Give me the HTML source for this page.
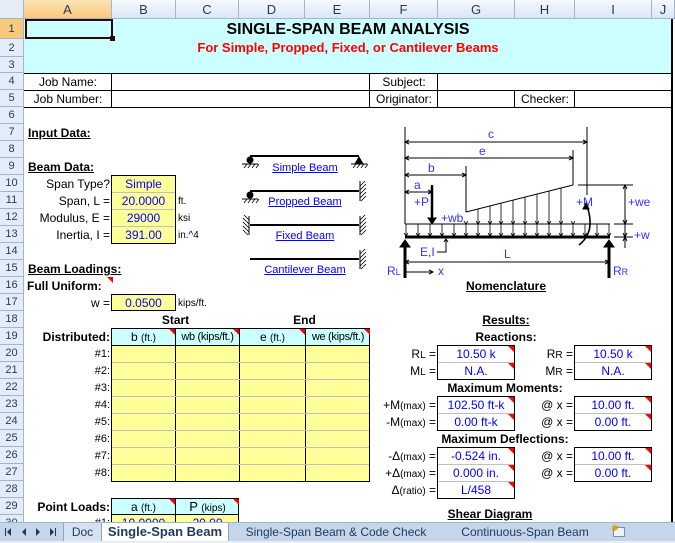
<!DOCTYPE html>
<html><head><meta charset="utf-8">
<style>
*{margin:0;padding:0;box-sizing:border-box}
body{width:675px;height:543px;overflow:hidden;background:#fff;font-family:"Liberation Sans",Arial,sans-serif;font-size:12px;color:#000;position:relative}
.a{position:absolute;white-space:nowrap}
.rh{position:absolute;left:0;width:24px;height:17px;background:#E4ECF7;border-bottom:1px solid #9EB6CE;border-right:1px solid #9EB6CE;text-align:center;font-size:11px;line-height:17px;color:#1F3A5C}
.ch{position:absolute;top:0;height:19px;background:linear-gradient(#F6F9FC,#DCE6F4);border-right:1px solid #9EB6CE;border-bottom:1px solid #9EB6CE;text-align:center;font-size:13px;line-height:19px;color:#1F3A5C}
.r{text-align:right}
.c{text-align:center}
.b{font-weight:bold}
.u{text-decoration:underline}
.y{background:#FFFF99}
.cy{background:#CCFFFF}
.blue{color:#0000FF}
.tri{position:absolute;width:0;height:0;border-top:6px solid #f00;border-left:6px solid transparent}
.lnk{color:#0000FF;text-decoration:underline;font-size:11px}
.tab{position:absolute;top:523px;height:18px;line-height:18px;font-size:12px;color:#1F3A5C;text-align:center}
</style></head><body>

<div class="ch" style="left:0;width:24px;background:#E4ECF7"></div>
<div class="ch" style="left:24px;width:88px;background:linear-gradient(#FBE3B4,#F8C97B)">A</div>
<div class="ch" style="left:112px;width:64px">B</div>
<div class="ch" style="left:176px;width:63px">C</div>
<div class="ch" style="left:239px;width:66px">D</div>
<div class="ch" style="left:305px;width:65px">E</div>
<div class="ch" style="left:370px;width:68px">F</div>
<div class="ch" style="left:438px;width:77px">G</div>
<div class="ch" style="left:515px;width:60px">H</div>
<div class="ch" style="left:575px;width:77px">I</div>
<div class="ch" style="left:652px;width:23px">J</div>

<div class="rh" style="top:19px;height:20px;line-height:20px;background:#F8C97B">1</div>
<div class="rh" style="top:39px;height:18px;line-height:18px">2</div>
<div class="rh" style="top:57px;height:16px;line-height:16px">3</div>
<div class="rh" style="top:73px">4</div><div class="rh" style="top:90px">5</div>
<div class="rh" style="top:107px">6</div><div class="rh" style="top:124px">7</div>
<div class="rh" style="top:141px">8</div><div class="rh" style="top:158px">9</div>
<div class="rh" style="top:175px">10</div><div class="rh" style="top:192px">11</div>
<div class="rh" style="top:209px">12</div><div class="rh" style="top:226px">13</div>
<div class="rh" style="top:243px">14</div><div class="rh" style="top:260px">15</div>
<div class="rh" style="top:277px">16</div><div class="rh" style="top:294px">17</div>
<div class="rh" style="top:311px">18</div><div class="rh" style="top:328px">19</div>
<div class="rh" style="top:345px">20</div><div class="rh" style="top:362px">21</div>
<div class="rh" style="top:379px">22</div><div class="rh" style="top:396px">23</div>
<div class="rh" style="top:413px">24</div><div class="rh" style="top:430px">25</div>
<div class="rh" style="top:447px">26</div><div class="rh" style="top:464px">27</div>
<div class="rh" style="top:481px">28</div><div class="rh" style="top:498px">29</div>
<div class="rh" style="top:515px">30</div>

<div class="a cy" style="left:24px;top:19px;width:648px;height:54px"></div>
<div class="a" style="left:25px;top:19px;width:88px;height:20px;border:2px solid #2a0a0a"></div>
<div class="a" style="left:110px;top:36px;width:5px;height:5px;background:#2a0a0a"></div>
<div class="a b c" style="left:24px;top:21px;width:648px;font-size:16px">SINGLE-SPAN BEAM ANALYSIS</div>
<div class="a b c" style="left:24px;top:40px;width:648px;font-size:13px;color:#FF0000">For Simple, Propped, Fixed, or Cantilever Beams</div>
<div class="a" style="left:671px;top:19px;width:2px;height:504px;background:#000"></div>

<div class="a" style="left:24px;top:73px;width:648px;height:35px;border-top:1px solid #000;border-bottom:1px solid #000"></div>
<div class="a" style="left:24px;top:90px;width:648px;height:1px;background:#000"></div>
<div class="a" style="left:111px;top:73px;width:1px;height:34px;background:#000"></div>
<div class="a" style="left:369px;top:73px;width:1px;height:34px;background:#000"></div>
<div class="a" style="left:437px;top:73px;width:1px;height:34px;background:#000"></div>
<div class="a" style="left:514px;top:90px;width:1px;height:17px;background:#000"></div>
<div class="a" style="left:574px;top:90px;width:1px;height:17px;background:#000"></div>
<div class="a c" style="left:24px;top:75px;width:88px">Job Name:</div>
<div class="a c" style="left:24px;top:92px;width:88px">Job Number:</div>
<div class="a c" style="left:370px;top:75px;width:68px">Subject:</div>
<div class="a c" style="left:370px;top:92px;width:68px">Originator:</div>
<div class="a c" style="left:515px;top:92px;width:60px">Checker:</div>

<div class="a b u" style="left:28px;top:126px">Input Data:</div>
<div class="a b u" style="left:28px;top:160px">Beam Data:</div>
<div class="a r" style="left:24px;top:177px;width:86px">Span Type?</div>
<div class="a r" style="left:24px;top:194px;width:86px">Span, L =</div>
<div class="a r" style="left:24px;top:211px;width:86px">Modulus, E =</div>
<div class="a r" style="left:24px;top:228px;width:86px">Inertia, I =</div>
<div class="a y" style="left:111px;top:175px;width:65px;height:69px;border:1px solid #000"></div>
<div class="a" style="left:112px;top:192px;width:63px;height:1px;background:#C0C0C0"></div>
<div class="a" style="left:112px;top:209px;width:63px;height:1px;background:#C0C0C0"></div>
<div class="a" style="left:112px;top:226px;width:63px;height:1px;background:#C0C0C0"></div>
<div class="a c blue" style="left:111px;top:177px;width:65px">Simple</div>
<div class="a c blue" style="left:111px;top:194px;width:65px">20.0000</div>
<div class="a c blue" style="left:111px;top:211px;width:65px">29000</div>
<div class="a c blue" style="left:111px;top:228px;width:65px">391.00</div>
<div class="a" style="left:178px;top:196px;font-size:10px">ft.</div>
<div class="a" style="left:178px;top:213px;font-size:10px">ksi</div>
<div class="a" style="left:178px;top:230px;font-size:10px">in.^4</div>

<div class="a b u" style="left:28px;top:262px">Beam Loadings:</div>
<div class="a b" style="left:27px;top:279px">Full Uniform:</div>
<div class="tri" style="left:107px;top:277px"></div>
<div class="a r" style="left:24px;top:296px;width:86px">w =</div>
<div class="a y" style="left:111px;top:294px;width:65px;height:17px;border:1px solid #000"></div>
<div class="a c blue" style="left:111px;top:296px;width:65px">0.0500</div>
<div class="a" style="left:178px;top:298px;font-size:10px">kips/ft.</div>

<div class="a b c" style="left:112px;top:313px;width:127px">Start</div>
<div class="a b c" style="left:239px;top:313px;width:131px">End</div>
<div class="a b r" style="left:24px;top:330px;width:86px">Distributed:</div>
<div class="a cy" style="left:111px;top:328px;width:259px;height:17px"></div>
<div class="a y" style="left:111px;top:345px;width:259px;height:137px"></div>
<div class="a" style="left:111px;top:328px;width:259px;height:154px;border:1px solid #000"></div>
<div class="a" style="left:111px;top:345px;width:259px;height:1px;background:#000"></div>
<div class="a" style="left:175px;top:328px;width:1px;height:154px;background:#000"></div>
<div class="a" style="left:239px;top:328px;width:1px;height:154px;background:#000"></div>
<div class="a" style="left:305px;top:328px;width:1px;height:154px;background:#000"></div>
<div class="a" style="left:112px;top:362px;width:257px;height:1px;background:#C0C0C0"></div>
<div class="a" style="left:112px;top:379px;width:257px;height:1px;background:#C0C0C0"></div>
<div class="a" style="left:112px;top:396px;width:257px;height:1px;background:#C0C0C0"></div>
<div class="a" style="left:112px;top:413px;width:257px;height:1px;background:#C0C0C0"></div>
<div class="a" style="left:112px;top:430px;width:257px;height:1px;background:#C0C0C0"></div>
<div class="a" style="left:112px;top:447px;width:257px;height:1px;background:#C0C0C0"></div>
<div class="a" style="left:112px;top:464px;width:257px;height:1px;background:#C0C0C0"></div>
<div class="a c" style="left:112px;top:330px;width:63px">b <span style="font-size:10px">(ft.)</span></div>
<div class="a c" style="left:176px;top:331px;width:63px;font-size:11px;letter-spacing:-0.3px">wb (kips/ft.)</div>
<div class="a c" style="left:240px;top:330px;width:65px">e <span style="font-size:10px">(ft.)</span></div>
<div class="a c" style="left:306px;top:331px;width:64px;font-size:11px;letter-spacing:-0.3px">we (kips/ft.)</div>
<div class="tri" style="left:169px;top:329px"></div><div class="tri" style="left:233px;top:329px"></div>
<div class="tri" style="left:299px;top:329px"></div><div class="tri" style="left:364px;top:329px"></div>
<div class="a r" style="left:24px;top:348px;width:86px;font-size:11px">#1:</div>
<div class="a r" style="left:24px;top:365px;width:86px;font-size:11px">#2:</div>
<div class="a r" style="left:24px;top:382px;width:86px;font-size:11px">#3:</div>
<div class="a r" style="left:24px;top:399px;width:86px;font-size:11px">#4:</div>
<div class="a r" style="left:24px;top:416px;width:86px;font-size:11px">#5:</div>
<div class="a r" style="left:24px;top:433px;width:86px;font-size:11px">#6:</div>
<div class="a r" style="left:24px;top:450px;width:86px;font-size:11px">#7:</div>
<div class="a r" style="left:24px;top:467px;width:86px;font-size:11px">#8:</div>

<div class="a b r" style="left:24px;top:500px;width:86px">Point Loads:</div>
<div class="a cy" style="left:111px;top:498px;width:128px;height:17px;border:1px solid #000"></div>
<div class="a y" style="left:111px;top:515px;width:128px;height:10px;border-left:1px solid #000;border-right:1px solid #000"></div>
<div class="a" style="left:175px;top:498px;width:1px;height:25px;background:#000"></div>
<div class="a c" style="left:112px;top:500px;width:63px">a <span style="font-size:10px">(ft.)</span></div>
<div class="a c" style="left:176px;top:499px;width:63px;font-size:13px">P <span style="font-size:10px">(kips)</span></div>
<div class="tri" style="left:169px;top:499px"></div><div class="tri" style="left:233px;top:499px"></div>
<div class="a c blue" style="left:112px;top:516px;width:63px;height:7px;overflow:hidden;line-height:14px">10.0000</div>
<div class="a c blue" style="left:176px;top:516px;width:63px;height:7px;overflow:hidden;line-height:14px">20.00</div>
<div class="a r" style="left:24px;top:516px;width:86px;height:7px;overflow:hidden;line-height:14px;font-size:11px">#1:</div>

<svg class="a" style="left:0;top:0" width="675" height="543">
<g stroke="#000" fill="none">
<line x1="250" y1="156" x2="359" y2="156" stroke-width="2"/>
<circle cx="250" cy="160" r="3" fill="#000"/>
<line x1="242" y1="164" x2="258" y2="164"/>
<path d="M244 168l3-4M248 168l3-4M252 168l3-4M256 168l3-4" stroke-width=".8"/>
<path d="M359 157l-4 7h8z" fill="#000"/>
<line x1="351" y1="164" x2="367" y2="164"/>
<path d="M353 168l3-4M357 168l3-4M361 168l3-4M365 168l3-4" stroke-width=".8"/>
<line x1="250" y1="191" x2="359" y2="191" stroke-width="2"/>
<circle cx="250" cy="195" r="3" fill="#000"/>
<line x1="242" y1="199" x2="258" y2="199"/>
<path d="M244 203l3-4M248 203l3-4M252 203l3-4M256 203l3-4" stroke-width=".8"/>
<line x1="360" y1="181" x2="360" y2="201"/>
<path d="M360 186l5-5M360 190l6-6M360 194l6-6M360 198l6-6M361 201l5-5" stroke-width=".8"/>
<line x1="250" y1="225" x2="359" y2="225" stroke-width="2"/>
<line x1="249" y1="216" x2="249" y2="235"/>
<path d="M249 220l-5-5M249 224l-6-6M249 228l-6-6M249 232l-6-6M248 235l-5-5" stroke-width=".8"/>
<line x1="360" y1="216" x2="360" y2="235"/>
<path d="M360 220l5-5M360 224l6-6M360 228l6-6M360 232l6-6M361 235l5-5" stroke-width=".8"/>
<line x1="250" y1="259" x2="359" y2="259" stroke-width="2"/>
<line x1="360" y1="250" x2="360" y2="269"/>
<path d="M360 254l5-5M360 258l6-6M360 262l6-6M360 266l6-6M361 269l5-5" stroke-width=".8"/>
</g>
<g stroke="#000" fill="none" stroke-width="1">
<line x1="405" y1="127" x2="405" y2="224"/>
<line x1="587" y1="127" x2="587" y2="195"/>
<line x1="573" y1="150" x2="573" y2="185"/>
<line x1="466" y1="166" x2="466" y2="212"/>
<line x1="405" y1="142" x2="587" y2="142"/><line x1="405" y1="158" x2="573" y2="158"/>
<line x1="405" y1="175" x2="466" y2="175"/><line x1="405" y1="192" x2="432" y2="192"/>
<path d="M409 140l-4 2 4 2M583 140l4 2-4 2M409 156l-4 2 4 2M569 156l4 2-4 2M409 173l-4 2 4 2M462 173l4 2-4 2M409 190l-4 2 4 2M428 190l4 2-4 2"/>
<line x1="432" y1="185" x2="432" y2="220" stroke-width="2.5"/>
<path d="M428 218l4 6 4-6z" fill="#000"/>
<line x1="405" y1="224" x2="610" y2="224"/>
<line x1="405" y1="237" x2="610" y2="237" stroke-width="3"/>
<path d="M466 212L573 185"/>
<g stroke-width=".8">
<path d="M406 224v12M418 224v12M430 224v12M442 224v12M454 224v12M466 224v12M478 224v12M490 224v12M501 224v12M513 224v12M525 224v12M537 224v12M549 224v12M561 224v12M573 224v12M585 224v12M597 224v12M609 224v12"/>
<path d="M404 233l2 3 2-3M416 233l2 3 2-3M428 233l2 3 2-3M440 233l2 3 2-3M452 233l2 3 2-3M464 233l2 3 2-3M476 233l2 3 2-3M488 233l2 3 2-3M499 233l2 3 2-3M511 233l2 3 2-3M523 233l2 3 2-3M535 233l2 3 2-3M547 233l2 3 2-3M559 233l2 3 2-3M571 233l2 3 2-3M583 233l2 3 2-3M595 233l2 3 2-3M607 233l2 3 2-3"/>
<path d="M478 209v15M490 206v18M501 203v21M513 200v24M525 197v27M537 194v30M549 191v33M561 188v36"/>
<path d="M464 221l2 3 2-3M476 221l2 3 2-3M488 221l2 3 2-3M499 221l2 3 2-3M511 221l2 3 2-3M523 221l2 3 2-3M535 221l2 3 2-3M547 221l2 3 2-3M559 221l2 3 2-3M571 221l2 3 2-3"/>
</g>
<line x1="405" y1="278" x2="405" y2="246" stroke-width="3"/>
<path d="M400 247l5-7 5 7z" fill="#000"/>
<line x1="609" y1="278" x2="609" y2="246" stroke-width="3"/>
<path d="M604 247l5-7 5 7z" fill="#000"/>
<line x1="405" y1="262" x2="609" y2="262"/>
<path d="M409 260l-4 2 4 2M605 260l4 2-4 2"/>
<line x1="405" y1="272" x2="433" y2="272"/><path d="M429 270l4 2-4 2"/>
<path d="M437 252h9v-13"/><path d="M444 242l2-3 2 3"/>
<line x1="578" y1="185" x2="633" y2="185"/>
<line x1="614" y1="224" x2="633" y2="224"/><line x1="614" y1="237" x2="633" y2="237"/>
<line x1="625" y1="185" x2="625" y2="224"/><path d="M623 189l2-4 2 4M623 220l2 4 2-4"/>
<line x1="625" y1="216" x2="625" y2="248"/><path d="M623 233l2 4 2-4M623 241l2-4 2 4"/>
<path d="M579 245Q596 232 587 206" stroke-width="1.5"/>
<path d="M583 209l3-6 3 6z" fill="#000"/>
</g>
<g font-family="Liberation Sans,Arial,sans-serif" font-size="12" fill="#3333FF">
<text x="488" y="138">c</text><text x="479" y="155">e</text><text x="428" y="172">b</text>
<text x="414" y="189">a</text><text x="414" y="206">+P</text><text x="441" y="222">+wb</text>
<text x="576" y="206">+M</text><text x="628" y="206">+we</text><text x="634" y="239">+w</text>
<text x="420" y="256">E,I</text><text x="504" y="258">L</text><text x="438" y="275">x</text>
<text x="387" y="275">R<tspan font-size="9">L</tspan></text><text x="613" y="275">R<tspan font-size="9">R</tspan></text>
</g>
</svg>
<div class="a lnk c" style="left:240px;top:162px;width:130px">Simple Beam</div>
<div class="a lnk c" style="left:240px;top:196px;width:130px">Propped Beam</div>
<div class="a lnk c" style="left:240px;top:230px;width:130px">Fixed Beam</div>
<div class="a lnk c" style="left:240px;top:264px;width:130px">Cantilever Beam</div>
<div class="a b u c" style="left:436px;top:279px;width:140px">Nomenclature</div>

<div class="a b u c" style="left:436px;top:313px;width:140px">Results:</div>
<div class="a b c" style="left:436px;top:330px;width:140px">Reactions:</div>
<div class="a r" style="left:370px;top:347px;width:66px">R<span style="font-size:10px">L</span> =</div>
<div class="a r" style="left:370px;top:364px;width:66px">M<span style="font-size:10px">L</span> =</div>
<div class="a r" style="left:515px;top:347px;width:58px">R<span style="font-size:10px">R</span> =</div>
<div class="a r" style="left:515px;top:364px;width:58px">M<span style="font-size:10px">R</span> =</div>
<div class="a b c" style="left:400px;top:381px;width:210px">Maximum Moments:</div>
<div class="a r" style="left:370px;top:398px;width:66px">+M<span style="font-size:10px">(max)</span> =</div>
<div class="a r" style="left:370px;top:415px;width:66px">-M<span style="font-size:10px">(max)</span> =</div>
<div class="a r" style="left:515px;top:398px;width:58px">@ x =</div>
<div class="a r" style="left:515px;top:415px;width:58px">@ x =</div>
<div class="a b c" style="left:400px;top:432px;width:210px">Maximum Deflections:</div>
<div class="a r" style="left:370px;top:449px;width:66px">-Δ<span style="font-size:10px">(max)</span> =</div>
<div class="a r" style="left:370px;top:466px;width:66px">+Δ<span style="font-size:10px">(max)</span> =</div>
<div class="a r" style="left:370px;top:483px;width:66px">Δ<span style="font-size:10px">(ratio)</span> =</div>
<div class="a r" style="left:515px;top:449px;width:58px">@ x =</div>
<div class="a r" style="left:515px;top:466px;width:58px">@ x =</div>
<div class="a b u c" style="left:400px;top:507px;width:180px">Shear Diagram</div>

<div class="a" style="left:437px;top:345px;width:78px;height:35px;border:1px solid #000"></div>
<div class="a" style="left:574px;top:345px;width:78px;height:35px;border:1px solid #000"></div>
<div class="a" style="left:437px;top:396px;width:78px;height:35px;border:1px solid #000"></div>
<div class="a" style="left:574px;top:396px;width:78px;height:35px;border:1px solid #000"></div>
<div class="a" style="left:437px;top:447px;width:78px;height:52px;border:1px solid #000"></div>
<div class="a" style="left:574px;top:447px;width:78px;height:35px;border:1px solid #000"></div>
<div class="a" style="left:438px;top:362px;width:76px;height:1px;background:#C0C0C0"></div>
<div class="a" style="left:575px;top:362px;width:76px;height:1px;background:#C0C0C0"></div>
<div class="a" style="left:438px;top:413px;width:76px;height:1px;background:#C0C0C0"></div>
<div class="a" style="left:575px;top:413px;width:76px;height:1px;background:#C0C0C0"></div>
<div class="a" style="left:438px;top:464px;width:76px;height:1px;background:#C0C0C0"></div>
<div class="a" style="left:438px;top:481px;width:76px;height:1px;background:#C0C0C0"></div>
<div class="a" style="left:575px;top:464px;width:76px;height:1px;background:#C0C0C0"></div>
<div class="a c blue" style="left:437px;top:347px;width:78px">10.50 k</div>
<div class="a c blue" style="left:437px;top:364px;width:78px">N.A.</div>
<div class="a c blue" style="left:574px;top:347px;width:78px">10.50 k</div>
<div class="a c blue" style="left:574px;top:364px;width:78px">N.A.</div>
<div class="a c blue" style="left:437px;top:398px;width:78px">102.50 ft-k</div>
<div class="a c blue" style="left:437px;top:415px;width:78px">0.00 ft-k</div>
<div class="a c blue" style="left:574px;top:398px;width:78px">10.00 ft.</div>
<div class="a c blue" style="left:574px;top:415px;width:78px">0.00 ft.</div>
<div class="a c blue" style="left:437px;top:449px;width:78px">-0.524 in.</div>
<div class="a c blue" style="left:437px;top:466px;width:78px">0.000 in.</div>
<div class="a c blue" style="left:437px;top:483px;width:78px">L/458</div>
<div class="a c blue" style="left:574px;top:449px;width:78px">10.00 ft.</div>
<div class="a c blue" style="left:574px;top:466px;width:78px">0.00 ft.</div>
<div class="tri" style="left:508px;top:346px"></div><div class="tri" style="left:508px;top:363px"></div>
<div class="tri" style="left:645px;top:346px"></div><div class="tri" style="left:645px;top:363px"></div>
<div class="tri" style="left:508px;top:397px"></div><div class="tri" style="left:508px;top:414px"></div>
<div class="tri" style="left:645px;top:397px"></div><div class="tri" style="left:645px;top:414px"></div>
<div class="tri" style="left:508px;top:448px"></div><div class="tri" style="left:508px;top:465px"></div>
<div class="tri" style="left:508px;top:482px"></div>
<div class="tri" style="left:645px;top:448px"></div><div class="tri" style="left:645px;top:465px"></div>

<div class="a" style="left:0;top:522px;width:675px;height:21px;background:#C5D5EA;border-top:1px solid #9EB6CE"></div>
<div class="a" style="left:0;top:541px;width:675px;height:2px;background:#E8EEF7"></div>
<svg class="a" style="left:0;top:523px" width="62" height="18">
<g fill="#1F3A5C"><rect x="5" y="5" width="1" height="8"/><path d="M11 5l-4 4 4 4z"/><path d="M26 5l-4 4 4 4z"/><path d="M36 5l4 4-4 4z"/><path d="M50 5l4 4-4 4z"/><rect x="55" y="5" width="1" height="8"/></g>
</svg>
<div class="tab" style="left:63px;width:38px;background:#D6E2F2;border-left:1px solid #8CA5C4">Doc</div>
<div class="tab b" style="left:101px;width:128px;background:#fff;color:#1F3A5C;border-left:1px solid #8CA5C4;border-right:1px solid #8CA5C4;font-size:13px">Single-Span Beam</div>
<div class="tab" style="left:232px;width:208px">Single-Span Beam &amp; Code Check</div>
<div class="tab" style="left:445px;width:160px">Continuous-Span Beam</div>
<div class="a" style="left:613px;top:527px;width:12px;height:10px;border:1px solid #7A8FAE;background:#EEF3FA"></div>
<div class="a" style="left:611px;top:523px;font-size:9px;color:#E0A000">✱</div>
</body></html>
